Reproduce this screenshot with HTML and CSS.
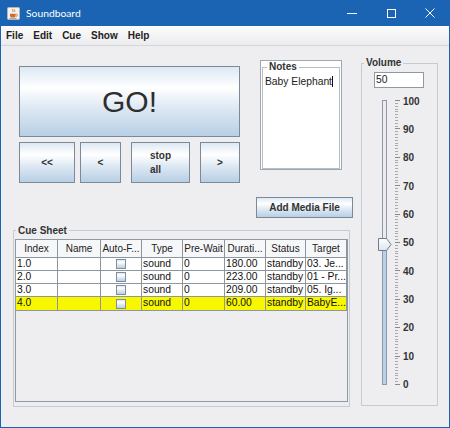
FILE: index.html
```html
<!DOCTYPE html>
<html>
<head>
<meta charset="utf-8">
<link rel="stylesheet" href="styles.css">
</head>
<body>
<div class="window">
  <div class="titlebar">
    <svg class="app-icon" width="13" height="13" viewBox="0 0 13 13">
      <rect x="0.5" y="0.5" width="12" height="12" rx="1" fill="#f3f3f3" stroke="#b5b5b5"/>
      <path d="M5.8 1.8c-1 1 1 2 0 3.3M7.6 2.4c-.8.8.8 1.5 0 2.6" stroke="#e0702a" fill="none" stroke-width="0.9"/>
      <path d="M3 6.8h5.6v1.6a2 2 0 0 1-2 2H5a2 2 0 0 1-2-2z" fill="#d9692b"/>
      <path d="M8.6 7.3h.8a1 1 0 0 1 0 2h-.8" stroke="#d9692b" fill="none" stroke-width="0.9"/>
      <path d="M2.3 11.3h7.2" stroke="#7f8fa3" stroke-width="0.9"/>
    </svg>
    <span class="title">Soundboard</span>
    <div class="controls">
      <div class="ctl"><svg width="10" height="10" viewBox="0 0 10 10"><path d="M0 5.5H10" stroke="#fff" stroke-width="1"/></svg></div>
      <div class="ctl"><svg width="10" height="10" viewBox="0 0 10 10"><rect x="1.5" y="1.5" width="8" height="8" fill="none" stroke="#fff" stroke-width="1"/></svg></div>
      <div class="ctl"><svg width="10" height="10" viewBox="0 0 10 10"><path d="M0.5 0.5L9.5 9.5M9.5 0.5L0.5 9.5" stroke="#fff" stroke-width="1"/></svg></div>
    </div>
  </div>
  <div class="menubar">
    <span>File</span><span>Edit</span><span>Cue</span><span>Show</span><span>Help</span>
  </div>
  <div class="content">
    <div class="left">
      <div class="top-row">
        <div class="go-col">
          <button class="btn go">GO!</button>
          <div class="btn-row">
            <button class="btn b1">&lt;&lt;</button>
            <button class="btn b2">&lt;</button>
            <button class="btn b3"><span class="stop-label">stop<br>all</span></button>
            <button class="btn b4">&gt;</button>
          </div>
        </div>
        <div class="notes-col">
          <div class="notes-scroll">
            <fieldset class="notes">
              <legend>Notes</legend>
              <div class="notes-text">Baby Elephant<span class="caret"></span></div>
            </fieldset>
          </div>
          <button class="btn add">Add Media File</button>
        </div>
      </div>
      <fieldset class="cue">
        <legend>Cue Sheet</legend>
        <div class="table-scroll">
          <div class="table">
            <div class="th">Index</div><div class="th">Name</div><div class="th">Auto-F...</div><div class="th">Type</div><div class="th">Pre-Wait</div><div class="th">Durati...</div><div class="th">Status</div><div class="th">Target</div>

            <div class="td">1.0</div><div class="td"></div><div class="td cbcell"><span class="cb"></span></div><div class="td">sound</div><div class="td">0</div><div class="td">180.00</div><div class="td">standby</div><div class="td">03. Je...</div>

            <div class="td">2.0</div><div class="td"></div><div class="td cbcell"><span class="cb"></span></div><div class="td">sound</div><div class="td">0</div><div class="td">223.00</div><div class="td">standby</div><div class="td">01 - Pr...</div>

            <div class="td">3.0</div><div class="td"></div><div class="td cbcell"><span class="cb"></span></div><div class="td">sound</div><div class="td">0</div><div class="td">209.00</div><div class="td">standby</div><div class="td">05. Ig...</div>

            <div class="td hl">4.0</div><div class="td hl"></div><div class="td hl cbcell"><span class="cb"></span></div><div class="td hl">sound</div><div class="td hl">0</div><div class="td hl">60.00</div><div class="td hl">standby</div><div class="td hl">BabyE...</div>
          </div>
        </div>
      </fieldset>
    </div>
    <fieldset class="volume">
      <legend>Volume</legend>
      <div class="vol-field">50</div>
      <div class="slider">
        <div class="track"></div>
        <div class="ticks"></div>
        <div class="labels">
          <span>100</span><span>90</span><span>80</span><span>70</span><span>60</span><span>50</span><span>40</span><span>30</span><span>20</span><span>10</span><span>0</span>
        </div>
        <svg class="thumb" width="14" height="13" viewBox="0 0 14 13">
          <defs>
            <linearGradient id="tg" x1="0" y1="0" x2="0" y2="1">
              <stop offset="0" stop-color="#ffffff"/>
              <stop offset="1" stop-color="#dde5ee"/>
            </linearGradient>
          </defs>
          <path d="M0.5 0.5H8.5L13 6.5L8.5 12.5H0.5Z" fill="url(#tg)" stroke="#6f7c88"/>
        </svg>
      </div>
    </fieldset>
  </div>
</div>
</body>
</html>
```
FILE: styles.css
```css
* { box-sizing: border-box; }

body {
  margin: 0;
  width: 450px;
  height: 428px;
  overflow: hidden;
  font-family: "Liberation Sans", Arial, sans-serif;
  background: #eeeef1;
}

.window {
  width: 450px;
  height: 428px;
  border: 1px solid #1b64b4;
  border-top: 0;
  display: flex;
  flex-direction: column;
  background: #eeeef1;
}

.titlebar {
  height: 26px;
  flex: none;
  background: #1b64b4;
  display: flex;
  align-items: center;
  color: #fff;
}

.app-icon { margin-left: 6px; flex: none; }

.title {
  margin-left: 6px;
  font-family: Lato, "Noto Sans", sans-serif;
  font-size: 10.3px;
}

.controls {
  margin-left: auto;
  display: flex;
  height: 100%;
}

.ctl {
  width: 38.67px;
  display: flex;
  align-items: center;
  justify-content: center;
}

.menubar {
  height: 20px;
  flex: none;
  background: linear-gradient(#fcfcfd, #ececee);
  border-bottom: 1px solid #d3d7db;
  display: flex;
  align-items: center;
  gap: 10px;
  padding-left: 5px;
  font-size: 10px;
  font-weight: bold;
  color: #222;
}

.content {
  flex: 1;
  display: flex;
  align-items: flex-start;
  padding-left: 12px;
}

.left {
  width: 340px;
  flex: none;
  display: flex;
  flex-direction: column;
}

.top-row {
  height: 178.5px;
  display: flex;
  align-items: flex-start;
}

.go-col {
  margin-left: 6px;
  margin-top: 20px;
  width: 221px;
}

.btn {
  display: flex;
  align-items: center;
  justify-content: center;
  margin: 0;
  padding: 0;
  border: 1px solid #7a8a99;
  background: linear-gradient(to bottom, #dde8f3 0%, #ffffff 30%, #dde8f3 60%, #b8cfe5 100%);
  font-family: "Liberation Sans", Arial, sans-serif;
  font-weight: bold;
  font-size: 10px;
  color: #333;
}

.go {
  width: 221px;
  height: 71px;
  font-size: 30px;
  font-weight: normal;
  color: #2e2e2e;
}

.btn-row {
  display: flex;
  margin-top: 5px;
  height: 41px;
}

.btn-row .btn { height: 41px; }
.b1 { width: 56px; }
.b2 { width: 41px; margin-left: 5px; }
.b3 { width: 59px; margin-left: 10px; }
.b4 { width: 40px; margin-left: 10px; }

.stop-label {
  text-align: left;
  line-height: 14px;
  display: inline-block;
}

.notes-col {
  margin-left: 16px;
  margin-top: 14px;
  width: 97px;
}

.notes-scroll {
  margin-left: 4px;
  width: 82px;
  height: 110px;
  border: 1px solid #9ea8b2;
  background: #fff;
  padding: 0 1px;
  display: flex;
}

fieldset {
  margin: 0;
  min-width: 0;
}

legend {
  padding: 0 2px;
  margin-left: 2px;
  font-size: 10px;
  font-weight: bold;
  line-height: 12px;
  color: #333;
}

.notes {
  flex: 1;
  padding: 3px 0 0 2px;
  border: 1px solid #b7bec5;
}

.notes-text {
  font-size: 10.3px;
  line-height: 12px;
  color: #222;
  white-space: nowrap;
}

.caret {
  display: inline-block;
  width: 1px;
  height: 11px;
  background: #111;
  vertical-align: -2px;
}

.add {
  margin-top: 27px;
  width: 97px;
  height: 21px;
}

.cue {
  width: 337px;
  padding: 0 0 4px 0;
  border: 1px solid #c6cbd0;
}

.table-scroll {
  margin: 2px 0 0 1px;
  width: 333px;
  height: 163px;
  border: 1px solid #8f99a3;
  background: #eeeef1;
}

.table {
  display: grid;
  grid-template-columns: 42px 43px 41px 41px 42px 41px 40px 41px;
  grid-template-rows: 18px repeat(4, 13.33px);
}

.th {
  border-right: 1px solid #8d969e;
  border-bottom: 1px solid #8d969e;
  background: #f6f7f9;
  font-size: 10px;
  line-height: 17px;
  text-align: center;
  white-space: nowrap;
  overflow: hidden;
  color: #222;
}

.td {
  border-right: 1px solid #8d969e;
  border-bottom: 1px solid #8d969e;
  background: #fff;
  font-size: 10.3px;
  line-height: 12.33px;
  padding-left: 1px;
  white-space: nowrap;
  overflow: hidden;
  color: #111;
}

.td.hl { background: #f7f700; }

.cbcell {
  display: flex;
  align-items: center;
  justify-content: center;
  padding-left: 0;
}

.cb {
  width: 10px;
  height: 10px;
  border: 1px solid #7f8e9c;
  background: linear-gradient(to bottom, #dde8f3 0%, #ffffff 30%, #dde8f3 60%, #b8cfe5 100%);
}

.volume {
  margin: 11px 0 0 8px;
  padding: 0;
  width: 77px;
  height: 349px;
  border: 1px solid #c6cbd0;
}

.vol-field {
  margin: 3px 0 0 12px;
  width: 50px;
  height: 16px;
  border: 1px solid #8f99a3;
  background: #fff;
  font-size: 10.3px;
  line-height: 14px;
  padding-left: 1px;
  color: #222;
}

.slider {
  position: relative;
  display: flex;
  align-items: flex-start;
  margin: 12px 0 0 20px;
}

.track {
  width: 5px;
  height: 285px;
  border: 1px solid #8e9aa6;
  background: linear-gradient(to bottom, #ebebee 0, #ebebee 50.5%, #bad0ea 50.5%, #bad0ea 100%);
}

.ticks {
  margin-left: 8px;
  width: 5px;
  height: 285px;
  background:
    repeating-linear-gradient(to bottom, #8a8a8a 0, #8a8a8a 1px, transparent 1px, transparent 28.4px) 0 0 / 5px 100% no-repeat,
    repeating-linear-gradient(to bottom, #aaaaaa 0, #aaaaaa 1px, transparent 1px, transparent 2.84px) 0 0 / 3px 100% no-repeat;
}

.labels {
  margin-left: 3px;
  margin-top: -3.5px;
  height: 293.5px;
  display: flex;
  flex-direction: column;
  justify-content: space-between;
  font-size: 10px;
  font-weight: bold;
  line-height: 10px;
  color: #333;
}

.thumb {
  position: absolute;
  left: -4px;
  top: 138px;
}
```
